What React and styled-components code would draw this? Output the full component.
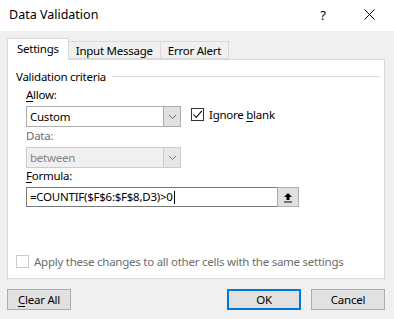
import React from 'react';
import styled, { createGlobalStyle } from 'styled-components';

const GlobalStyle = createGlobalStyle`
  html, body {
    margin: 0;
    padding: 0;
    background: #f0f0f0;
  }
  body {
    font-family: "Noto Sans", "Open Sans", sans-serif;
    font-size: 11.5px;
    letter-spacing: -0.25px;
    color: #000;
  }
`;

const Window = styled.div`
  width: 394px;
  height: 319px;
  display: flex;
  flex-direction: column;
  background: #f0f0f0;
  overflow: hidden;
`;

const TitleBar = styled.div`
  height: 31px;
  flex: none;
  background: #fff;
  display: flex;
  align-items: center;
  padding-left: 9px;
`;

const Title = styled.div`
  flex: 1;
  font-size: 12.5px;
  letter-spacing: 0;
  margin-top: -2px;
`;

const TitleButton = styled.div`
  width: ${({ w }) => w}px;
  height: 20px;
  display: flex;
  align-items: center;
  justify-content: center;
  font-size: 13px;
  margin-top: -2px;
`;

const Body = styled.div`
  flex: 1;
  display: flex;
  flex-direction: column;
  padding: 7px 9px 0 7px;
`;

const TabRow = styled.div`
  display: flex;
  align-items: flex-end;
  height: 21px;
  position: relative;
  z-index: 1;
`;

const Tab = styled.div`
  height: ${({ active }) => (active ? 22 : 18)}px;
  padding: 0 ${({ active }) => (active ? 9 : 7)}px;
  margin-bottom: ${({ active }) => (active ? -1 : 0)}px;
  display: flex;
  align-items: center;
  box-sizing: border-box;
  background: ${({ active }) => (active ? '#fff' : '#f0f0f0')};
  border: 1px solid #d9d9d9;
  border-bottom: ${({ active }) => (active ? 'none' : '1px solid #d9d9d9')};
  border-left: ${({ first }) => (first ? '1px solid #d9d9d9' : 'none')};
  padding-bottom: ${({ active }) => (active ? 2 : 0)}px;
`;

const Panel = styled.div`
  height: 220px;
  box-sizing: border-box;
  background: #fff;
  border: 1px solid #d9d9d9;
  display: flex;
  flex-direction: column;
  padding: 8px 4px 0 8px;
`;

const GroupHeader = styled.div`
  display: flex;
  align-items: center;
  gap: 6px;
  height: 16px;
`;

const GroupLine = styled.div`
  flex: 1;
  height: 1px;
  background: #dcdcdc;
`;

const Field = styled.div`
  display: flex;
  flex-direction: column;
  padding-left: 10px;
  margin-top: ${({ mt }) => mt}px;
`;

const Label = styled.div`
  height: 16px;
  line-height: 16px;
  color: ${({ disabled }) => (disabled ? '#6d6d6d' : '#000')};
  margin-bottom: 3px;
`;

const U = styled.span`
  text-decoration: underline;
  text-underline-offset: 2px;
`;

const Row = styled.div`
  display: flex;
  align-items: flex-start;
  gap: 10px;
`;

const Select = styled.div`
  width: 155px;
  height: 21px;
  box-sizing: border-box;
  display: flex;
  border: 1px solid ${({ disabled }) => (disabled ? '#cccccc' : '#adadad')};
  background: ${({ disabled }) => (disabled ? '#f0f0f0' : '#fff')};
  color: ${({ disabled }) => (disabled ? '#838383' : '#000')};
`;

const SelectText = styled.div`
  flex: 1;
  padding-left: 3px;
  line-height: 19px;
`;

const DropButton = styled.div`
  width: 16px;
  border-left: 1px solid ${({ disabled }) => (disabled ? '#cccccc' : '#adadad')};
  background: ${({ disabled }) => (disabled ? '#e6e6e6' : '#e1e1e1')};
  display: flex;
  align-items: center;
  justify-content: center;
`;

const Check = styled.div`
  width: 13px;
  height: 13px;
  box-sizing: border-box;
  border: 1px solid ${({ disabled }) => (disabled ? '#cccccc' : '#333333')};
  background: #fff;
  display: flex;
  align-items: center;
  justify-content: center;
  flex: none;
`;

const CheckRow = styled.div`
  display: flex;
  align-items: center;
  gap: 5px;
  color: ${({ disabled }) => (disabled ? '#6d6d6d' : '#000')};
  margin-top: ${({ mt }) => mt ?? 0}px;
  margin-bottom: ${({ mb }) => mb ?? 0}px;
`;

const FormulaBox = styled.div`
  width: 273px;
  height: 20px;
  box-sizing: border-box;
  border: 1px solid #7a7a7a;
  display: flex;
`;

const FormulaText = styled.div`
  flex: 1;
  padding-left: 3px;
  line-height: 18px;
  display: flex;
  align-items: center;
`;

const Caret = styled.span`
  display: inline-block;
  width: 1px;
  height: 13px;
  background: #000;
  margin-left: 1px;
`;

const CollapseButton = styled.div`
  width: 20px;
  border: 1px solid #adadad;
  margin: -1px -1px -1px 0;
  background: #e1e1e1;
  display: flex;
  align-items: center;
  justify-content: center;
`;

const Spacer = styled.div`
  flex: 1;
`;

const Footer = styled.div`
  display: flex;
  align-items: center;
  height: 20px;
  margin-top: 10px;
  gap: 10px;
`;

const Button = styled.div`
  width: ${({ w }) => w}px;
  height: 21px;
  box-sizing: border-box;
  border: ${({ primary }) => (primary ? '2px solid #0078d7' : '1px solid #adadad')};
  background: #e1e1e1;
  display: flex;
  align-items: center;
  justify-content: center;
`;

const Chevron = ({ color = '#6a6a6a' }) => (
  <svg width="9" height="6" viewBox="0 0 9 6">
    <path d="M1 1 L4.5 4.5 L8 1" fill="none" stroke={color} strokeWidth="1" />
  </svg>
);

export default function App() {
  return (
    <Window>
      <GlobalStyle />
      <TitleBar>
        <Title>Data Validation</Title>
        <TitleButton w={20}>?</TitleButton>
        <TitleButton w={26} style={{ marginLeft: 23, marginRight: 12 }}>
          <svg width="11" height="11" viewBox="0 0 11 11">
            <path d="M0.5 0.5 L10.5 10.5 M10.5 0.5 L0.5 10.5" stroke="#000" strokeWidth="1" />
          </svg>
        </TitleButton>
      </TitleBar>
      <Body>
        <TabRow>
          <Tab active first>Settings</Tab>
          <Tab>Input Message</Tab>
          <Tab>Error Alert</Tab>
        </TabRow>
        <Panel>
          <GroupHeader>
            <span>Validation criteria</span>
            <GroupLine />
          </GroupHeader>
          <Field mt={3}>
            <Label>
              <U>A</U>llow:
            </Label>
            <Row>
              <Select>
                <SelectText>Custom</SelectText>
                <DropButton>
                  <Chevron />
                </DropButton>
              </Select>
              <CheckRow mt={1}>
                <Check>
                  <svg width="11" height="11" viewBox="0 0 11 11">
                    <path d="M1.5 5.5 L4.2 8.5 L9.8 1.8" fill="none" stroke="#000" strokeWidth="1.1" />
                  </svg>
                </Check>
                <span>
                  Ignore <U>b</U>lank
                </span>
              </CheckRow>
            </Row>
          </Field>
          <Field mt={1}>
            <Label disabled>Data:</Label>
            <Select disabled>
              <SelectText>between</SelectText>
              <DropButton disabled>
                <Chevron color="#7a7a7a" />
              </DropButton>
            </Select>
          </Field>
          <Field mt={0}>
            <Label>
              <U>F</U>ormula:
            </Label>
            <FormulaBox>
              <FormulaText>
                =COUNTIF($F$6:$F$8,D3)&gt;0
                <Caret />
              </FormulaText>
              <CollapseButton>
                <svg width="10" height="11" viewBox="0 0 10 11">
                  <path d="M5 1 L9 5 H6.5 V8 H3.5 V5 H1 Z" fill="#000" />
                  <rect x="1" y="9.5" width="8" height="1" fill="#000" />
                </svg>
              </CollapseButton>
            </FormulaBox>
          </Field>
          <Spacer />
          <CheckRow disabled mb={9}>
            <Check disabled />
            <span>Apply these changes to all other cells with the same settings</span>
          </CheckRow>
        </Panel>
        <Footer>
          <Button w={64}>
            <span>
              <U>C</U>lear All
            </span>
          </Button>
          <Spacer />
          <Button w={74} primary>OK</Button>
          <Button w={74}>Cancel</Button>
        </Footer>
      </Body>
    </Window>
  );
}
